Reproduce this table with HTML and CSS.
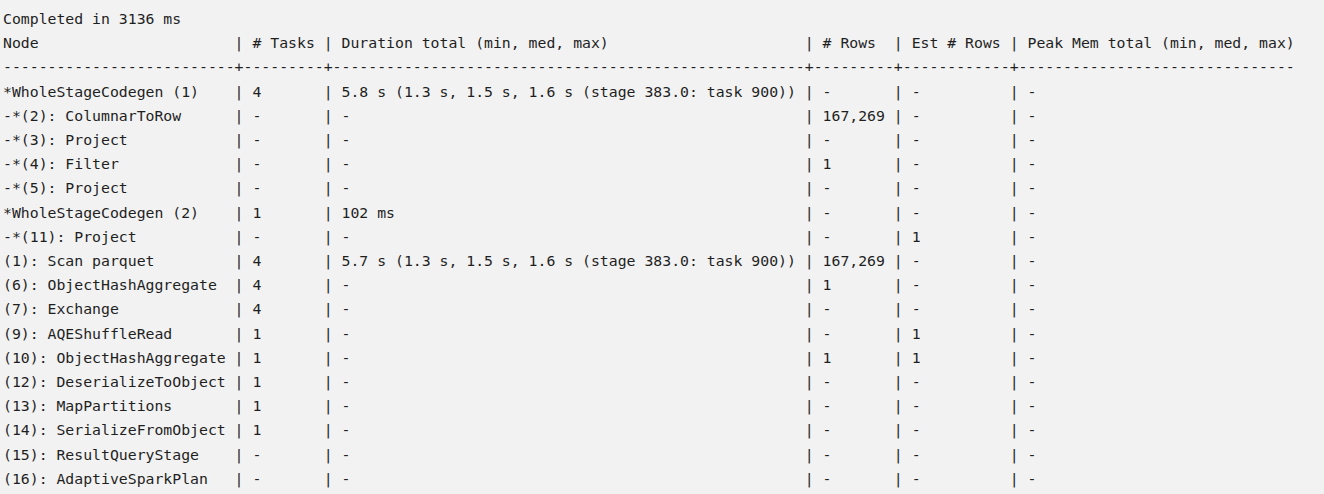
FILE: index.html
```html
<!DOCTYPE html>
<html lang="en">
<head>
<meta charset="utf-8">
<title>Query plan metrics</title>
<link rel="stylesheet" href="styles.css">
</head>
<body>
<main class="cell-output">
<pre class="plan-text">Completed in 3136 ms
Node                      | # Tasks | Duration total (min, med, max)                      | # Rows  | Est # Rows | Peak Mem total (min, med, max)
--------------------------+---------+-----------------------------------------------------+---------+------------+-------------------------------
*WholeStageCodegen (1)    | 4       | 5.8 s (1.3 s, 1.5 s, 1.6 s (stage 383.0: task 900)) | -       | -          | -
-*(2): ColumnarToRow      | -       | -                                                   | 167,269 | -          | -
-*(3): Project            | -       | -                                                   | -       | -          | -
-*(4): Filter             | -       | -                                                   | 1       | -          | -
-*(5): Project            | -       | -                                                   | -       | -          | -
*WholeStageCodegen (2)    | 1       | 102 ms                                              | -       | -          | -
-*(11): Project           | -       | -                                                   | -       | 1          | -
(1): Scan parquet         | 4       | 5.7 s (1.3 s, 1.5 s, 1.6 s (stage 383.0: task 900)) | 167,269 | -          | -
(6): ObjectHashAggregate  | 4       | -                                                   | 1       | -          | -
(7): Exchange             | 4       | -                                                   | -       | -          | -
(9): AQEShuffleRead       | 1       | -                                                   | -       | 1          | -
(10): ObjectHashAggregate | 1       | -                                                   | 1       | 1          | -
(12): DeserializeToObject | 1       | -                                                   | -       | -          | -
(13): MapPartitions       | 1       | -                                                   | -       | -          | -
(14): SerializeFromObject | 1       | -                                                   | -       | -          | -
(15): ResultQueryStage    | -       | -                                                   | -       | -          | -
(16): AdaptiveSparkPlan   | -       | -                                                   | -       | -          | -</pre>
</main>
</body>
</html>
```

FILE: styles.css
```css
html, body {
  margin: 0;
  padding: 0;
  background: #f2f2f2;
}

.cell-output {
  padding: 7px 3px 0;
}

.plan-text {
  margin: 0;
  font-family: "DejaVu Sans Mono", "Liberation Mono", monospace;
  font-size: 14.8px;
  line-height: 24.2px;
  color: #1f1f1f;
  white-space: pre;
}
```
